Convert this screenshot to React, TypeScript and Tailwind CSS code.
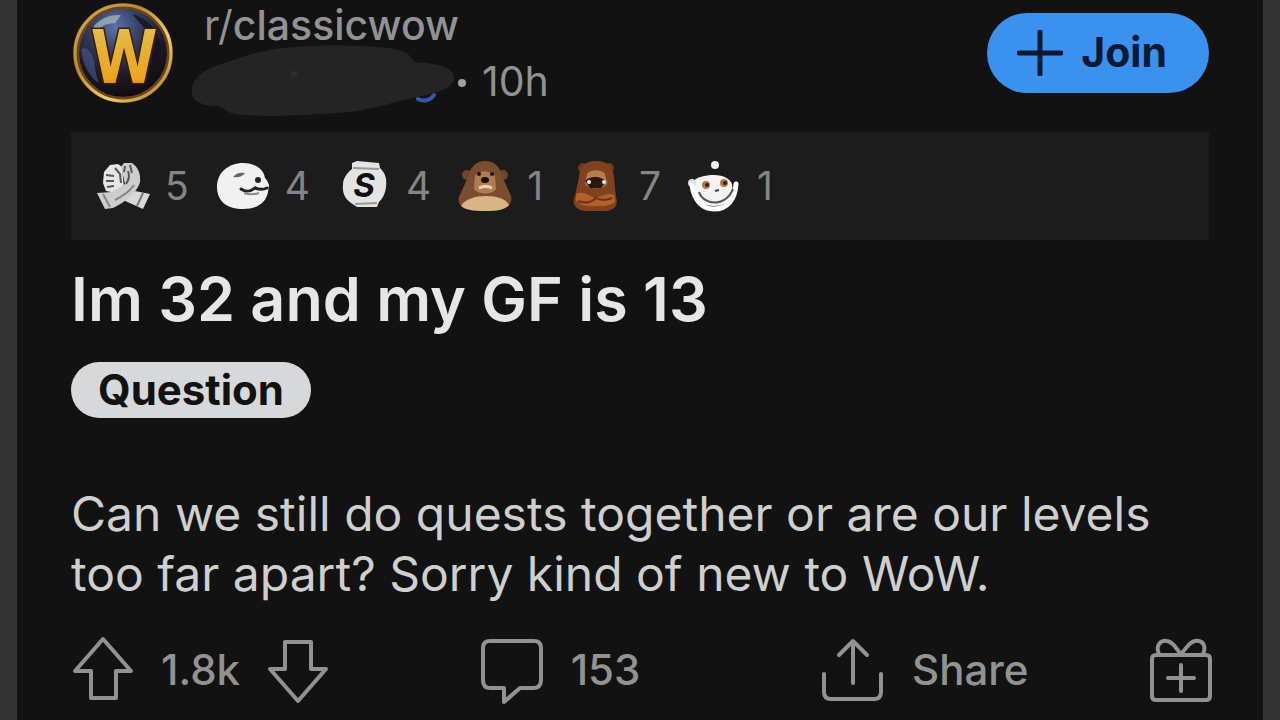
import type { ReactNode } from 'react';

interface Award {
  name: string;
  count: number;
  icon: ReactNode;
}

function CommunityIcon() {
  return (
    <svg viewBox="0 0 100 100" className="w-[102px] h-[102px] shrink-0" role="img" aria-label="classicwow">
      <defs>
        <linearGradient id="ring" x1="0" y1="0" x2="1" y2="1">
          <stop offset="0" stopColor="#d3ad5c" />
          <stop offset="0.35" stopColor="#b98a35" />
          <stop offset="0.65" stopColor="#f0cf7a" />
          <stop offset="1" stopColor="#a87022" />
        </linearGradient>
        <linearGradient id="gold" x1="0" y1="0" x2="0" y2="1">
          <stop offset="0" stopColor="#e8c268" />
          <stop offset="0.4" stopColor="#e3b332" />
          <stop offset="0.75" stopColor="#eda51f" />
          <stop offset="1" stopColor="#a5481c" />
        </linearGradient>
        <radialGradient id="globe" cx="0.42" cy="0.22" r="0.75">
          <stop offset="0" stopColor="#5a74ae" />
          <stop offset="0.35" stopColor="#353f64" />
          <stop offset="0.7" stopColor="#1d1b2a" />
          <stop offset="1" stopColor="#100c10" />
        </radialGradient>
      </defs>
      <circle cx="51" cy="49" r="49" fill="#1e1408" />
      <circle cx="51" cy="49" r="45" fill="url(#globe)" />
      <path d="M22 23c8-9 18-12 27-11l-6 8c-7-1-14 3-19 9z" fill="#a9bfb8" opacity="0.7" />
      <path d="M10 45c5-4 12 5 13 14s2 14 5 20c-10-6-17-20-18-34z" fill="#4d5a8c" opacity="0.6" />
      <path d="M60 11c14 3 25 15 28 30 1 14-4 26-10 32 2-14 3-28-2-42-4-8-11-14-16-20z" fill="#15131c" opacity="0.8" />
      <circle cx="51" cy="49" r="46" fill="none" stroke="#6a4415" strokeWidth="6" />
      <circle cx="51" cy="49" r="47" fill="none" stroke="url(#ring)" strokeWidth="3" />
      <text
        x="52"
        y="78"
        textAnchor="middle"
        fontFamily="'Liberation Sans Narrow', Roboto, sans-serif"
        fontWeight="700"
        fontSize="74"
        fill="url(#gold)"
        stroke="#3c1d08"
        strokeWidth="3"
        paintOrder="stroke"
      >
        W
      </text>
    </svg>
  );
}

const awards: Award[] = [
  {
    name: 'Hand clasp',
    count: 5,
    icon: (
      <>
        <path d="M28 40l12-9 15 3-7 15z" fill="#d8d8d8" />
        <path d="M48 33l-6 13" stroke="#777" strokeWidth="2" />
        <path d="M9 12l6-7 8-1 4 3 2 22-8 4-10-2-3-8z" fill="#e6e6e6" />
        <path d="M2 33l15-1 13-8-4-17 3-4 8 0c6 4 9 11 8 19-2 9-14 20-27 26l-8 1z" fill="#cdcdcd" />
        <path d="M11 15l8 1M11 21l8 0M12 27l7-1M20 8l5 6 1 9M30 6l-1 6M35 5l2 8M31 24c3-4 4-8 2-13" fill="none" stroke="#555" strokeWidth="2" />
        <path d="M8 34l7 13M20 40c8-4 15-9 19-15" fill="none" stroke="#858585" strokeWidth="2" />
      </>
    ),
  },
  {
    name: 'Seal',
    count: 4,
    icon: (
      <>
        <path d="M28 3c13 0 21 7 22 15 2 2 3 4 4 7l-1 7C51 43 42 49 28 49 13 49 2 42 2 27 2 12 14 3 28 3z" fill="#f1f1f1" />
        <path d="M18 17c3-4 7-5 12-4-3 4-7 5-12 4z" fill="#666" />
        <circle cx="43" cy="20" r="3" fill="#222" />
        <path d="M26 29c6 4 10 2 14-1 5 2 8 2 12 0" fill="none" stroke="#222" strokeWidth="3" strokeLinecap="round" />
        <path d="M29 33c6 2 12 1 15 0" fill="none" stroke="#888" strokeWidth="2" />
      </>
    ),
  },
  {
    name: 'Silver',
    count: 4,
    icon: (
      <>
        <path d="M16 3l5-2 22 2 1 5c5 5 7 10 6 19-1 7-3 11-7 15l-2 5-20 0-6-4C9 39 6 32 7 25c0-7 4-12 9-16z" fill="#e4e4e4" />
        <path d="M17 8l26 1M19 44l22-1" stroke="#999" strokeWidth="2" />
        <text
          x="28"
          y="37"
          textAnchor="middle"
          fontFamily="Inter, sans-serif"
          fontWeight="700"
          fontStyle="italic"
          fontSize="33"
          fill="#111"
        >
          S
        </text>
      </>
    ),
  },
  {
    name: 'Bear',
    count: 1,
    icon: (
      <>
        <circle cx="10" cy="15" r="5" fill="#714527" />
        <circle cx="46" cy="15" r="5" fill="#714527" />
        <path d="M28 1c10 0 15 6 17 15l9 20c2 9-4 15-26 15S0 45 2 37l9-20C13 8 18 1 28 1z" fill="#7b4c2d" />
        <path d="M4 46c4-7 14-10 25-10s20 3 23 9c-4 5-13 6-24 6S8 50 4 46z" fill="#d9b586" />
        <path d="M18 16c2-6 17-6 20 0l1 13c-3 6-18 6-22 0z" fill="#b07a52" />
        <circle cx="22" cy="14" r="2" fill="#20130c" />
        <circle cx="35" cy="14" r="2" fill="#20130c" />
        <ellipse cx="28" cy="20" rx="4" ry="3" fill="#1c100c" />
        <path d="M22 28c4-2 9-2 13 0" fill="none" stroke="#ead3b4" strokeWidth="3" />
      </>
    ),
  },
  {
    name: 'Bear hug',
    count: 7,
    icon: (
      <>
        <circle cx="14" cy="8" r="5" fill="#6f3a1b" />
        <circle cx="40" cy="8" r="5" fill="#6f3a1b" />
        <path d="M27 1c12 0 17 6 18 16l2 20c3 9-3 14-11 14H17C7 50 2 45 6 36l4-19C11 7 16 1 27 1z" fill="#7f421d" />
        <path d="M18 14c3-5 15-5 18 0l2 9c-2 7-20 7-22 0z" fill="#b97c4c" />
        <path d="M16 21c3-3 6-4 10-4s10 2 11 5l-5 6H21z" fill="#2b1710" />
        <circle cx="20" cy="22" r="2" fill="#eee" />
        <circle cx="35" cy="22" r="2" fill="#eee" />
        <path d="M7 34c7-4 13 2 19 4 7-1 11-6 19-3l1 7c-8 5-13 4-19 4-8 1-14 0-20-5z" fill="#b4602a" />
        <path d="M9 41c8 3 14 1 18-3 5 3 11 2 16 0" fill="none" stroke="#6d3215" strokeWidth="2" />
      </>
    ),
  },
  {
    name: 'Snoo',
    count: 1,
    icon: (
      <>
        <circle cx="28" cy="5" r="4" fill="#eee" />
        <path d="M6 22c3-5 12-7 21-7 10 0 16 4 18 9l1 10c-4 9-10 12-19 12-11 0-18-6-21-13z" fill="#f4f4f4" />
        <circle cx="5" cy="23" r="4" fill="#ddd" />
        <path d="M5 25c2 16 11 24 22 24 13 0 21-9 22-25" fill="none" stroke="#fff" strokeWidth="5" strokeLinecap="round" />
        <path d="M12 32c4 13 26 16 34-3" fill="none" stroke="#555" strokeWidth="2" />
        <circle cx="19" cy="25" r="4" fill="#b57a3c" />
        <circle cx="37" cy="23" r="4" fill="#b57a3c" />
        <circle cx="20" cy="25" r="2" fill="#3a1d10" />
        <circle cx="38" cy="23" r="2" fill="#3a1d10" />
        <path d="M28 31l4-1" stroke="#444" strokeWidth="2" />
      </>
    ),
  },
];

// Scribbled-out username
function HiddenAuthor() {
  return (
    <svg viewBox="0 0 270 72" className="w-[270px] h-[72px] absolute left-0 -top-0.5" role="img" aria-label="Hidden author">
      <path
        d="M2 43C6 28 20 22 38 17C58 9 82 3 106 2C142-1 178 1 198 3C214 5 220 9 224 17C240 18 262 20 264 31C265 42 252 46 240 49C222 53 214 55 202 58C182 64 160 68 130 69C100 71 66 72 46 69C36 68 34 62 26 61C10 60 0 56 2 43Z"
        fill="#242424"
      />
      <circle cx="104" cy="29" r="3" fill="#303030" />
      <path d="M228 54c6 3 13 1 16-4" fill="none" stroke="#2c5aa8" strokeWidth="4" strokeLinecap="round" />
    </svg>
  );
}

function ActionIcon({ children }: { children: ReactNode }) {
  return (
    <svg
      viewBox="0 0 64 68"
      className="w-16 h-17 shrink-0"
      fill="none"
      stroke="currentColor"
      strokeWidth="4"
      strokeLinejoin="round"
      strokeLinecap="round"
      aria-hidden="true"
    >
      {children}
    </svg>
  );
}

export default function App() {
  return (
    <div className="min-h-screen flex bg-[#333333] px-[17px] font-['Inter','Liberation_Sans',sans-serif]">
      <article className="flex-1 bg-[#121212] px-[54px] pt-[3px] text-[#929292]">
        <header className="flex items-start justify-between">
          <div className="flex">
            <CommunityIcon />
            <div className="pl-[31px]">
              <a href="#classicwow" className="block text-[41px] leading-[44px] font-medium">
                <span className="font-normal">r/</span>classicwow
              </a>
              <div className="relative -ml-[14px] flex items-center gap-4 pl-[268px] h-[72px] text-[41px] leading-[72px]">
                <HiddenAuthor />
                <span className="w-2 h-2 rounded-full bg-[#a0a0a0]" />
                <time className="-mt-1">10h</time>
              </div>
            </div>
          </div>
          <button className="mt-[10px] flex h-20 items-center gap-[18px] rounded-full bg-[#3b92ee] pl-[30px] pr-[42px] text-[41px] font-bold text-[#0b1a35]">
            <svg viewBox="0 0 46 46" className="w-[46px] h-[46px]" stroke="currentColor" strokeWidth="5" strokeLinecap="round" aria-hidden="true">
              <path d="M23 2v42M2 23h42" />
            </svg>
            Join
          </button>
        </header>

        <ul className="mt-[13px] flex h-[108px] items-center gap-[26px] bg-[#1c1c1c] px-6">
          {awards.map((award) => (
            <li key={award.name} className="flex items-center gap-[14px] text-[39px] text-[#858585]">
              <svg viewBox="0 0 56 52" className="w-14 h-13" role="img" aria-label={award.name}>
                {award.icon}
              </svg>
              {award.count}
            </li>
          ))}
        </ul>

        <h1 className="mt-6 text-[61px] leading-[70px] font-semibold text-[#e6e6e6]">Im 32 and my GF is 13</h1>
        <span className="mt-7 inline-flex h-14 items-center rounded-full bg-[#d7d8da] px-[27px] text-[42px] leading-[54px] font-bold text-[#121212]">
          Question
        </span>

        <p className="mt-[66px] text-[48px] leading-[60px] text-[#cfcfcf]">
          Can we still do quests together or are our levels too far apart? Sorry kind of new to WoW.
        </p>

        <footer className="mt-8 flex items-center text-[42px] leading-[68px] font-medium">
          <div className="flex w-[36%] items-center gap-[26px]">
            <button aria-label="Upvote">
              <ActionIcon>
                <path d="M32 3l28 32H45v27H20V35H4z" />
              </ActionIcon>
            </button>
            <span>1.8k</span>
            <button aria-label="Downvote">
              <ActionIcon>
                <path d="M32 65L4 33h15V6h26v27h15z" />
              </ActionIcon>
            </button>
          </div>
          <div className="w-[30%]">
            <button className="flex items-center gap-[26px]">
              <ActionIcon>
                <path d="M9 5h44q7 0 7 7v32q0 8-8 8H39L23 66V52H9q-7 0-7-8V12q0-7 7-7z" />
              </ActionIcon>
              153
            </button>
          </div>
          <button className="flex items-center gap-[26px]">
            <ActionIcon>
              <path d="M2 38v18q0 7 7 7h43q7 0 7-7V38M31 47V6M17 19L31 5l14 14" />
            </ActionIcon>
            Share
          </button>
          <button aria-label="Give award" className="-mr-1 ml-auto">
            <ActionIcon>
              <path d="M7 19h50q4 0 4 4v37q0 4-4 4H7q-4 0-4-4V23q0-4 4-4zM32 29v26M19 42h26M10 18C6 9 12 4 18 5c7 1 9 8 14 13 5-5 8-12 14-13 7-1 12 4 8 13" />
            </ActionIcon>
          </button>
        </footer>
      </article>
    </div>
  );
}
